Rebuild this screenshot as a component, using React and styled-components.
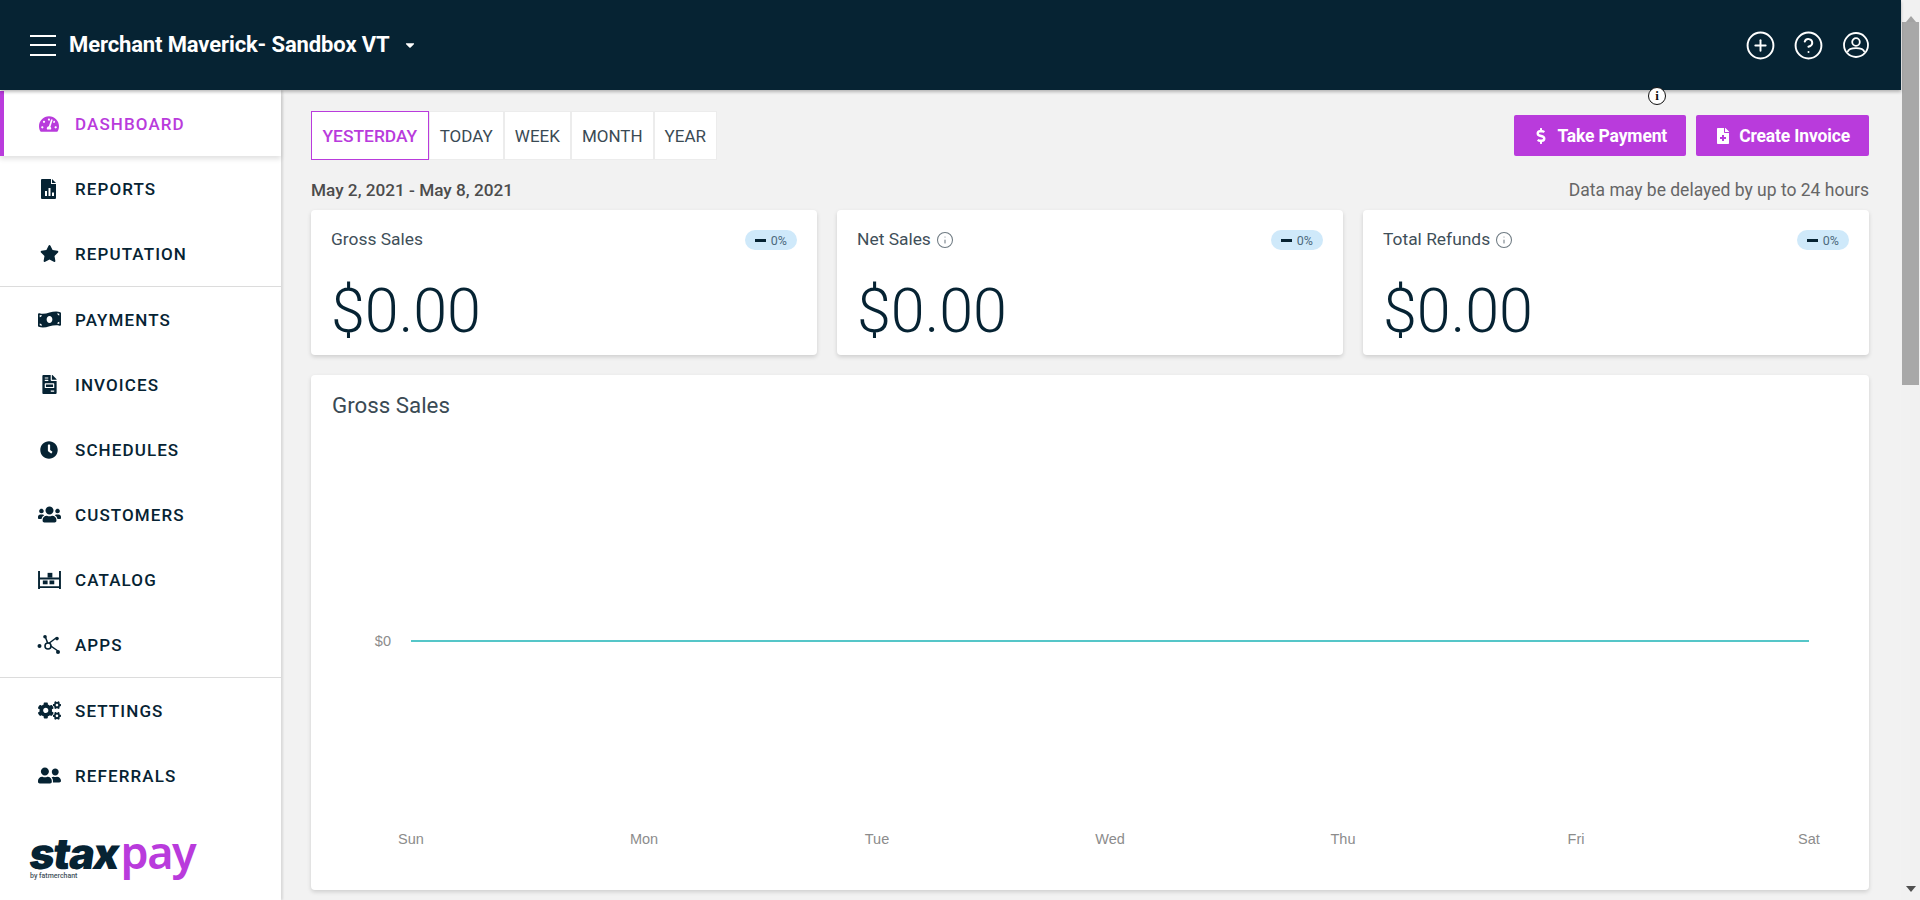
import React from "react";
import styled, { createGlobalStyle } from "styled-components";
import {
  FaTachometerAlt,
  FaStar,
  FaMoneyBillWave,
  FaFileInvoice,
  FaClock,
  FaUsers,
  FaCogs,
  FaUserFriends,
  FaDollarSign,
  FaFileMedical,
  FaCaretDown,
} from "react-icons/fa";
import { CirclePlus, CircleHelp, Info } from "lucide-react";

const navy = "#062333";
const purple = "#b93bdc";

const GlobalStyle = createGlobalStyle`
  html, body {
    margin: 0;
    height: 100%;
    overflow: hidden;
    background: #f2f2f2;
    font-family: Roboto, "Liberation Sans", sans-serif;
    color: ${navy};
  }
  * { box-sizing: border-box; }
`;

// icons that the packages do not have
const ReportIcon = () => (
  <svg width="16" height="20" viewBox="0 0 16 20">
    <path
      fill="currentColor"
      fillRule="evenodd"
      d="M1 0h9v5h5v14a1 1 0 0 1-1 1H1a1 1 0 0 1-1-1V1a1 1 0 0 1 1-1zM11 0l4 4h-4zM4 12v5h2v-5zM7.5 9v8h2V9zM11 13.5V17h2v-3.5z"
    />
  </svg>
);

const CatalogIcon = () => (
  <svg width="23" height="20" viewBox="0 0 24 21" fill="none" stroke="currentColor">
    <path strokeWidth="2" d="M1 1v19M23 1v19M1 9h22M1 18h22" />
    <rect x="10" y="3" width="5" height="5" fill="currentColor" stroke="none" />
    <rect x="5" y="11" width="5" height="4" fill="currentColor" stroke="none" />
    <rect x="12" y="11" width="5" height="4" fill="currentColor" stroke="none" />
  </svg>
);

const AppsIcon = () => (
  <svg width="24" height="20" viewBox="0 0 24 20" fill="none" stroke="currentColor">
    <path strokeWidth="1.5" d="M8 1l3 8 10 7M11 9l8-6" />
    <circle cx="11" cy="11" r="3" strokeWidth="1.6" fill="#fff" />
    <g fill="currentColor" stroke="none">
      <circle cx="2.5" cy="11" r="2" />
      <circle cx="8" cy="1.8" r="1.8" />
      <circle cx="20" cy="3.6" r="1.8" />
      <circle cx="21" cy="17" r="2" />
    </g>
  </svg>
);

const AccountIcon = () => (
  <svg width="26" height="26" viewBox="0 0 26 26" fill="none" stroke="currentColor" strokeWidth="1.8">
    <circle cx="13" cy="13" r="12" />
    <circle cx="13" cy="10" r="3.8" />
    <path d="M4.500 20c1-3 4.500-3.800 8.500-3.800s7.500.8 8.500 3.800" />
  </svg>
);

const navGroups = [
  [
    { label: "DASHBOARD", icon: <FaTachometerAlt size={20} />, active: true },
    { label: "REPORTS", icon: <ReportIcon /> },
    { label: "REPUTATION", icon: <FaStar size={19} /> },
  ],
  [
    { label: "PAYMENTS", icon: <FaMoneyBillWave size={23} /> },
    { label: "INVOICES", icon: <FaFileInvoice size={19} /> },
    { label: "SCHEDULES", icon: <FaClock size={18} /> },
    { label: "CUSTOMERS", icon: <FaUsers size={23} /> },
    { label: "CATALOG", icon: <CatalogIcon /> },
    { label: "APPS", icon: <AppsIcon /> },
  ],
  [
    { label: "SETTINGS", icon: <FaCogs size={23} /> },
    { label: "REFERRALS", icon: <FaUserFriends size={23} /> },
  ],
];

const ranges = ["YESTERDAY", "TODAY", "WEEK", "MONTH", "YEAR"];

const stats = [
  { label: "Gross Sales" },
  { label: "Net Sales", info: true },
  { label: "Total Refunds", info: true },
];

const days = ["Sun", "Mon", "Tue", "Wed", "Thu", "Fri", "Sat"];

function App() {
  return (
    <Page>
      <GlobalStyle />
      <Window>
        <Header>
          <HeaderLeft>
            <Burger>
              <span />
              <span />
              <span />
            </Burger>
            <Title>Merchant Maverick- Sandbox VT</Title>
            <FaCaretDown size={14} color="#fff" />
          </HeaderLeft>
          <HeaderRight>
            <CirclePlus size={31} strokeWidth={1.5} />
            <CircleHelp size={31} strokeWidth={1.5} />
            <AccountIcon />
          </HeaderRight>
        </Header>
        <Body>
          <Sidebar>
            {navGroups.map((group, i) => (
              <NavGroup key={i} $last={i === navGroups.length - 1}>
                {group.map((item) => (
                  <NavItem key={item.label} $active={item.active}>
                    <NavIcon>{item.icon}</NavIcon>
                    {item.label}
                  </NavItem>
                ))}
              </NavGroup>
            ))}
            <Logo>
              <LogoRow>
                <LogoStax>stax</LogoStax>
                <LogoPay>pay</LogoPay>
              </LogoRow>
              <LogoBy>by fatmerchant</LogoBy>
            </Logo>
          </Sidebar>
          <Main>
            <FloatingInfo>i</FloatingInfo>
            <Toolbar>
              <Tabs>
                {ranges.map((r, i) => (
                  <Tab key={r} $active={i === 0}>
                    {r}
                  </Tab>
                ))}
              </Tabs>
              <Actions>
                <ActionButton>
                  <FaDollarSign size={16} />
                  Take Payment
                </ActionButton>
                <ActionButton>
                  <FaFileMedical size={16} />
                  Create Invoice
                </ActionButton>
              </Actions>
            </Toolbar>
            <DateRow>
              <DateText>May 2, 2021 - May 8, 2021</DateText>
              <DelayText>Data may be delayed by up to 24 hours</DelayText>
            </DateRow>
            <Stats>
              {stats.map((s) => (
                <StatCard key={s.label}>
                  <StatTop>
                    <StatLabel>
                      {s.label}
                      {s.info && <Info size={18} strokeWidth={1.4} color="#6f7b83" />}
                    </StatLabel>
                    <Trend>
                      <TrendDash />
                      0%
                    </Trend>
                  </StatTop>
                  <StatValue>$0.00</StatValue>
                </StatCard>
              ))}
            </Stats>
            <ChartCard>
              <ChartTitle>Gross Sales</ChartTitle>
              <svg width="1558" height="460" viewBox="0 0 1558 460">
                <text x="80" y="216" fontSize="14.5" fill="#8c8c8c" fontFamily="Liberation Sans, sans-serif" textAnchor="end">
                  $0
                </text>
                <line x1="100" y1="211" x2="1498" y2="211" stroke="#55c6c8" strokeWidth="2" />
                {days.map((d, i) => (
                  <text
                    key={d}
                    x={100 + i * 233}
                    y="414"
                    fontSize="14.5"
                    fill="#8c8c8c"
                    fontFamily="Liberation Sans, sans-serif"
                    textAnchor="middle"
                  >
                    {d}
                  </text>
                ))}
              </svg>
            </ChartCard>
          </Main>
        </Body>
      </Window>
      <Scrollbar>
        <ScrollArrow $up />
        <ScrollThumb />
        <ScrollSpace />
        <ScrollArrow />
      </Scrollbar>
    </Page>
  );
}

export default App;

const Page = styled.div`
  display: flex;
  width: 1920px;
  height: 900px;
  overflow: hidden;
`;

const Window = styled.div`
  width: 1901px;
  display: flex;
  flex-direction: column;
`;

const Header = styled.header`
  height: 90px;
  flex: none;
  background: ${navy};
  display: flex;
  align-items: center;
  justify-content: space-between;
  padding: 0 32px 0 30px;
  box-shadow: 0 2px 3px rgba(0, 0, 0, 0.25);
  position: relative;
  z-index: 3;
`;

const HeaderLeft = styled.div`
  display: flex;
  align-items: center;
  gap: 13px;
`;

const Burger = styled.div`
  width: 26px;
  height: 21px;
  margin-right: -2px;
  display: flex;
  flex-direction: column;
  justify-content: space-between;

  span {
    height: 2px;
    background: #fff;
  }
`;

const Title = styled.div`
  font-size: 22px;
  font-weight: 700;
  color: #fff;
  margin-left: 2px;
  margin-top: -1px;
  letter-spacing: -0.12px;
`;

const HeaderRight = styled.div`
  display: flex;
  align-items: center;
  gap: 17px;
  color: #fff;

  svg:last-child {
    margin-left: 2px;
  }
`;

const Body = styled.div`
  flex: 1;
  display: flex;
  min-height: 0;
`;

const Sidebar = styled.aside`
  width: 281px;
  flex: none;
  background: #fff;
  padding-top: 1px;
  box-shadow: 2px 0 2px rgba(0, 0, 0, 0.1);
  position: relative;
  z-index: 2;
`;

const NavGroup = styled.div`
  border-bottom: ${({ $last }) => ($last ? "none" : "1px solid #dcdcdc")};
`;

const NavItem = styled.div`
  height: 65px;
  display: flex;
  align-items: center;
  padding-left: 37px;
  gap: 14px;
  font-size: 17px;
  font-weight: 500;
  letter-spacing: 1.1px;
  color: ${({ $active }) => ($active ? purple : navy)};
  box-shadow: ${({ $active }) =>
    $active ? `inset 4px 0 0 ${purple}, 0 3px 5px rgba(0, 0, 0, 0.12)` : "none"};
`;

const NavIcon = styled.span`
  width: 24px;
  display: flex;
  justify-content: center;
`;

const Logo = styled.div`
  margin: 22px 0 0 30px;
`;

const LogoRow = styled.div`
  display: flex;
  align-items: baseline;
  height: 44px;
  line-height: 44px;
`;

const LogoStax = styled.span`
  font-family: Inter, sans-serif;
  font-size: 43px;
  font-weight: 900;
  letter-spacing: -1.5px;
  color: ${navy};
  transform: skewX(-8deg);
  display: inline-block;
`;

const LogoPay = styled.span`
  font-family: "Noto Sans", sans-serif;
  font-size: 45px;
  font-weight: 600;
  letter-spacing: -1.5px;
  color: ${purple};
  margin-left: 2px;
`;

const LogoBy = styled.div`
  font-size: 7px;
  font-weight: 500;
  color: #44525b;
  margin-top: -2px;
`;

const Main = styled.main`
  flex: 1;
  padding: 21px 32px 0 30px;
  position: relative;
`;

const FloatingInfo = styled.span`
  position: absolute;
  top: -3px;
  right: 235px;
  width: 18px;
  height: 18px;
  border-radius: 50%;
  background: #fff;
  border: 1.5px solid #111;
  color: #111;
  font: 700 13px/15px "Liberation Serif", serif;
  text-align: center;
  z-index: 4;
`;

const Toolbar = styled.div`
  display: flex;
  justify-content: space-between;
  align-items: center;
`;

const Tabs = styled.div`
  display: flex;
`;

const Tab = styled.div`
  height: 49px;
  padding: 0 ${({ $active }) => ($active ? "10.5px" : "10px")};
  display: flex;
  align-items: center;
  font-size: ${({ $active }) => ($active ? "17.4px" : "17px")};
  background: #fff;
  font-weight: ${({ $active }) => ($active ? 500 : 400)};
  color: ${({ $active }) => ($active ? purple : "#3a4a54")};
  border: 1px solid ${({ $active }) => ($active ? purple : "#ececec")};
`;

const Actions = styled.div`
  display: flex;
  gap: 10px;
`;

const ActionButton = styled.button`
  height: 41px;
  padding: 0 19px;
  display: flex;
  align-items: center;
  gap: 8px;
  border: none;
  border-radius: 2px;
  background: ${purple};
  color: #fff;
  font-family: Roboto, sans-serif;
  font-size: 17.5px;
  font-weight: 700;
  letter-spacing: -0.15px;
`;

const DateRow = styled.div`
  height: 50px;
  padding-top: 10px;
  display: flex;
  justify-content: space-between;
  align-items: center;
`;

const DateText = styled.div`
  font-size: 17.2px;
  font-weight: 500;
  color: #4c4c4c;
`;

const DelayText = styled.div`
  font-size: 17.5px;
  color: #666;
`;

const Stats = styled.div`
  display: grid;
  grid-template-columns: repeat(3, 1fr);
  gap: 20px;
`;

const StatCard = styled.div`
  height: 145px;
  background: #fff;
  border-radius: 4px;
  padding: 20px;
  box-shadow: 0 2px 4px rgba(0, 0, 0, 0.15);
`;

const StatTop = styled.div`
  display: flex;
  justify-content: space-between;
  align-items: flex-start;
`;

const StatLabel = styled.div`
  display: flex;
  align-items: center;
  gap: 5px;
  font-size: 17.4px;
  line-height: 19px;
  color: #3f4f59;
`;

const Trend = styled.div`
  height: 20px;
  padding: 0 10px;
  display: flex;
  align-items: center;
  gap: 5px;
  border-radius: 10px;
  background: #cfe9fa;
  color: #4d6a7d;
  font-size: 12.5px;
`;

const TrendDash = styled.span`
  width: 11px;
  height: 3px;
  background: ${navy};
`;

const StatValue = styled.div`
  font-size: 61px;
  font-weight: 300;
  line-height: 70px;
  margin-top: 26px;
  color: ${navy};
`;

const ChartCard = styled.div`
  margin-top: 20px;
  height: 515px;
  background: #fff;
  border-radius: 4px;
  box-shadow: 0 2px 4px rgba(0, 0, 0, 0.15);
  overflow: hidden;
`;

const ChartTitle = styled.div`
  height: 55px;
  padding: 17px 21px 0;
  font-size: 22.3px;
  color: #3a4a54;
`;

const Scrollbar = styled.div`
  width: 19px;
  flex: none;
  background: #f1f1f1;
  display: flex;
  flex-direction: column;
  align-items: center;
`;

const ScrollArrow = styled.div`
  flex: none;
  width: 0;
  border-left: 5px solid transparent;
  border-right: 5px solid transparent;
  border-top: ${({ $up }) => ($up ? "0" : "6px solid #505050")};
  border-bottom: ${({ $up }) => ($up ? "6px solid #a3a3a3" : "0")};
  margin-top: ${({ $up }) => ($up ? "0" : "8px")};
  background-clip: padding-box;
  box-sizing: content-box;
  height: 0;
  padding: ${({ $up }) => ($up ? "8px 0 8px" : "0 0 8px")};
`;

const ScrollThumb = styled.div`
  width: 17px;
  height: 363px;
  flex: none;
  background: #a8a8a8;
`;

const ScrollSpace = styled.div`
  flex: 1;
`;
